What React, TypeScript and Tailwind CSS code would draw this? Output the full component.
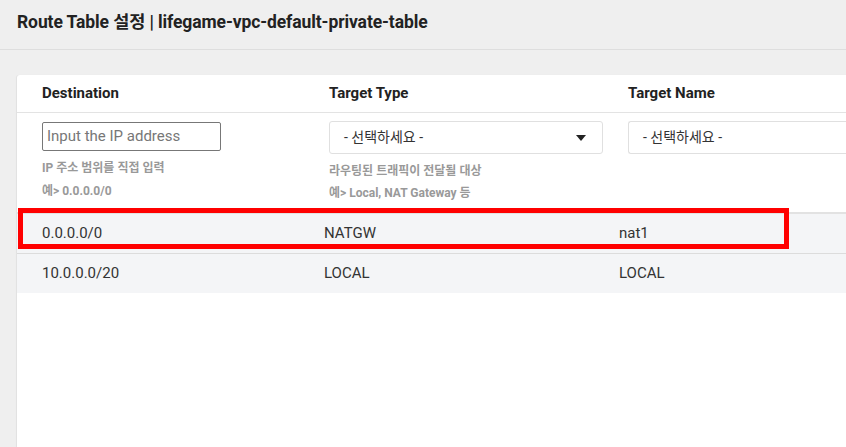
import React from "react";

const font = { fontFamily: 'Roboto, "Noto Sans CJK KR", sans-serif' };

function Caret() {
  return (
    <svg width="10" height="6" viewBox="0 0 10 6" className="shrink-0">
      <path d="M0 0 L10 0 L5 6 Z" fill="#222" />
    </svg>
  );
}

export default function App() {
  const rows = [
    { d: "0.0.0.0/0", t: "NATGW", n: "nat1" },
    { d: "10.0.0.0/20", t: "LOCAL", n: "LOCAL" },
  ];
  return (
    <div className="w-[846px] h-[447px] overflow-hidden bg-[#efefef] flex flex-col" style={font}>
      <div className="h-[50px] shrink-0 border-b border-[#dedede] flex items-center pl-[17px] pb-[14px] pt-[10px]">
        <h1 className="text-[17.5px] font-bold text-[#222] tracking-[-0.1px]">
          Route Table 설정 | lifegame-vpc-default-private-table
        </h1>
      </div>
      <div className="flex-1 pt-[25px] pl-[17px]">
        <div className="bg-white h-full rounded-tl-[3px] w-[900px] shadow-[-1px_0_1px_rgba(0,0,0,0.06)]">
          <div className="h-[38px] border-b border-[#e3e3e3] grid grid-cols-[287px_299px_1fr] pl-[25px] items-center text-[15px] font-bold text-[#222]">
            <div>Destination</div>
            <div>Target Type</div>
            <div>Target Name</div>
          </div>
          <div className="grid grid-cols-[287px_299px_1fr] pl-[25px] pt-[8px] h-[99px]">
            <div>
              <div className="mt-[1px] w-[179px] h-[29px] border border-[#777] rounded-[2px] flex items-center pl-[4px] text-[15px] text-[#777]">
                Input the IP address
              </div>
              <div className="mt-[6px] text-[12px] font-bold text-[#999] leading-[23px]">
                <div>IP 주소 범위를 직접 입력</div>
                <div>예&gt; 0.0.0.0/0</div>
              </div>
            </div>
            <div>
              <div className="w-[274px] h-[33px] border border-[#e0e0e0] rounded-[3px] flex items-center justify-between pl-[14px] pr-[16px] text-[14px] text-[#333]">
                <span>- 선택하세요 -</span>
                <Caret />
              </div>
              <div className="mt-[6px] text-[12px] font-bold text-[#999] leading-[22px]">
                <div>라우팅된 트래픽이 전달될 대상</div>
                <div>예&gt; Local, NAT Gateway 등</div>
              </div>
            </div>
            <div>
              <div className="w-[260px] h-[33px] border border-[#e0e0e0] border-r-0 rounded-l-[3px] flex items-center pl-[14px] text-[14px] text-[#333]">
                <span>- 선택하세요 -</span>
              </div>
            </div>
          </div>
          <div className="border-t-2 border-[#e2e2e2]">
            <div className="relative h-[40px] bg-[#f4f5f7] border-b border-[#dcdcdc] grid grid-cols-[282px_295px_1fr] pl-[25px] items-center text-[15px] text-[#333]">
              <div>{rows[0].d}</div>
              <div>{rows[0].t}</div>
              <div>{rows[0].n}</div>
              <div className="absolute left-[1px] top-[-6px] w-[771px] h-[41px] border-[5px] border-[#ff0000] pointer-events-none" />
            </div>
            <div className="h-[39px] bg-[#f4f5f7] grid grid-cols-[282px_295px_1fr] pl-[25px] items-center text-[15px] text-[#333]">
              <div>{rows[1].d}</div>
              <div>{rows[1].t}</div>
              <div>{rows[1].n}</div>
            </div>
          </div>
        </div>
      </div>
    </div>
  );
}
